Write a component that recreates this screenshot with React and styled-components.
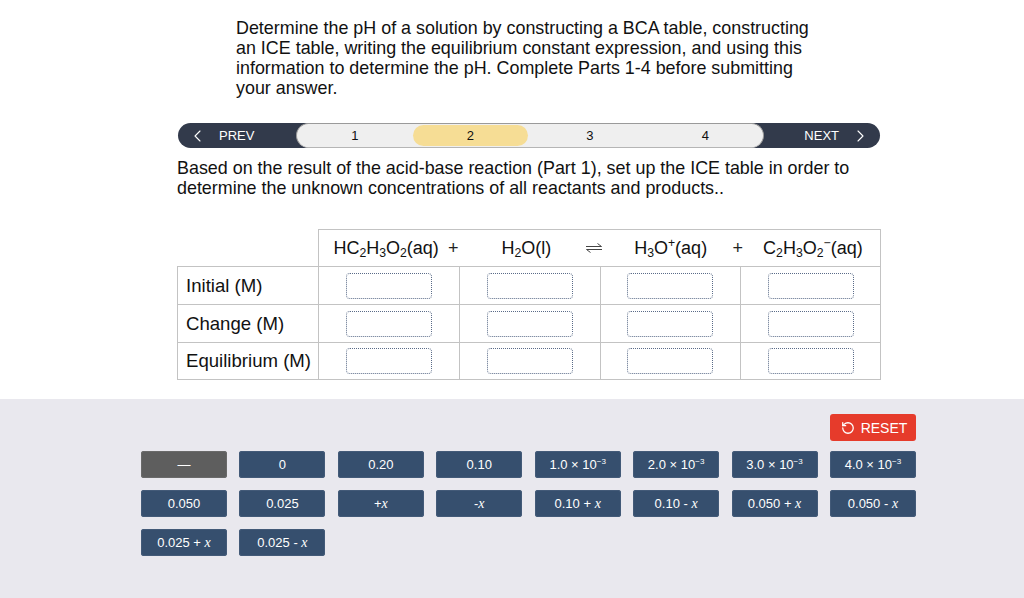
import React from "react";
import styled, { createGlobalStyle } from "styled-components";
import { RotateCcw } from "lucide-react";

const Global = createGlobalStyle`
  html, body { margin: 0; padding: 0; background: #fff; }
  body { font-family: "Liberation Sans", Arial, sans-serif; color: #111; }
  * { box-sizing: border-box; }
`;

const Page = styled.div`
  min-height: 598px;
  display: flex;
  flex-direction: column;
`;

const Main = styled.div`
  width: 704px;
  margin-left: 177px;
  padding-top: 18px;
  padding-bottom: 19px;
`;

const Intro = styled.p`
  margin: 0 0 25px 59px;
  width: 590px;
  font-size: 17.9px;
  line-height: 20px;
  color: #111;
`;

const Nav = styled.div`
  display: flex;
  height: 25px;
  margin-left: 1px;
  width: 702px;
  background: #323a4b;
  border-radius: 13px;
`;

const NavButton = styled.div`
  width: ${(p) => p.$w}px;
  display: flex;
  align-items: center;
  justify-content: ${(p) => (p.$right ? "flex-end" : "flex-start")};
  gap: 18px;
  padding: 0 ${(p) => (p.$right ? "16px" : "0")} 0 ${(p) => (p.$right ? "0" : "16px")};
  color: #fff;
  font-size: 13px;
`;

const Track = styled.div`
  flex: 1;
  display: flex;
  background: #efefef;
  border: 1px solid #9a9a9a;
  border-bottom-color: #b5b5b5;
  border-radius: 13px;
  overflow: hidden;
`;

const Step = styled.div`
  flex: 1;
  display: flex;
  align-items: center;
  justify-content: center;
  font-size: 13px;
  color: #111;
  background: ${(p) => (p.$active ? "#f6dd95" : "transparent")};
  border-radius: 12px;
  margin: 1px ${(p) => (p.$active ? "4px" : "0")} 1px 0;
`;

const Prompt = styled.p`
  margin: 10px 0 31px 0;
  font-size: 17.9px;
  line-height: 20px;
  color: #111;
`;

const Table = styled.div`
  display: grid;
  grid-template-columns: 141px repeat(4, 1fr);
  grid-template-rows: 37px repeat(3, 38px);
  width: 704px;
`;

const Corner = styled.div``;

const Header = styled.div`
  grid-column: 2 / span 4;
  display: flex;
  align-items: center;
  border: 1px solid #c3c3c3;
  border-bottom: none;
  font-size: 18px;
  color: #111;
`;

const Species = styled.div`
  flex: 1;
  text-align: center;
  white-space: nowrap;
  padding-left: ${(p) => p.$shift || 0}px;
`;

const Op = styled.div`
  width: 0;
  display: flex;
  justify-content: center;
  white-space: nowrap;
  color: #222;
  & > svg { flex-shrink: 0; }
`;

const Sub = styled.sub`
  font-size: 0.68em;
  vertical-align: -0.22em;
  line-height: 0;
`;

const Sup = styled.sup`
  font-size: 0.68em;
  vertical-align: 0.55em;
  line-height: 0;
`;

const Label = styled.div`
  display: flex;
  align-items: center;
  padding-left: 8px;
  font-size: 18.6px;
  color: #111;
  border-top: 1px solid #c3c3c3;
  border-left: 1px solid #c3c3c3;
  border-bottom: ${(p) => (p.$last ? "1px solid #c3c3c3" : "none")};
`;

const Cell = styled.div`
  display: flex;
  align-items: center;
  justify-content: center;
  border-top: 1px solid #c3c3c3;
  border-left: 1px solid #c3c3c3;
  border-right: ${(p) => (p.$lastCol ? "1px solid #c3c3c3" : "none")};
  border-bottom: ${(p) => (p.$last ? "1px solid #c3c3c3" : "none")};
`;

const Drop = styled.div`
  width: 86px;
  height: 26px;
  background: #fff;
  border: 1px dotted #5a6b88;
  border-radius: 4px;
`;

const Tray = styled.div`
  flex: 1;
  background: #e9e8ee;
  padding: 15px 0 30px 141px;
`;

const TrayInner = styled.div`
  width: 775px;
  display: flex;
  flex-direction: column;
  gap: 10px;
`;

const ResetRow = styled.div`
  display: flex;
  justify-content: flex-end;
`;

const Reset = styled.button`
  width: 86px;
  height: 27px;
  border: none;
  border-radius: 3px;
  background: #e63b2b;
  color: #fff;
  font-family: "Liberation Sans", Arial, sans-serif;
  font-size: 14px;
  display: flex;
  align-items: center;
  justify-content: center;
  gap: 6px;
  padding: 0 0 0 2px;
`;

const Grid = styled.div`
  display: grid;
  grid-template-columns: repeat(8, 86px);
  column-gap: 12.43px;
  row-gap: 12px;
`;

const Tile = styled.div`
  height: 27px;
  border-radius: 3px;
  background: ${(p) => (p.$muted ? "#5e5e5e" : "#364f6e")};
  color: #fff;
  font-size: 13px;
  display: flex;
  align-items: center;
  justify-content: center;
  white-space: nowrap;
  box-shadow: 0 0 0 1px ${(p) => (p.$muted ? "#6a6a6a" : "#435a78")} inset;
`;

const X = styled.span`
  font-family: "Liberation Serif", "Times New Roman", serif;
  font-style: italic;
  font-size: 14px;
`;

const Exp = styled.sup`
  font-size: 0.62em;
  vertical-align: 0.6em;
  line-height: 0;
`;

const Chev = ({ dir }) => (
  <svg width="7" height="12" viewBox="0 0 7 12" fill="none">
    <path
      d={dir === "left" ? "M6 1 L1 6 L6 11" : "M1 1 L6 6 L1 11"}
      stroke="#fff"
      strokeWidth="1.1"
      strokeLinecap="round"
      strokeLinejoin="round"
    />
  </svg>
);

const Equil = () => (
  <svg width="18" height="12" viewBox="0 0 18 12" fill="none">
    <path d="M1 4.5 H16.5 L12.5 1.5" stroke="#444" strokeWidth="1" strokeLinejoin="round" />
    <path d="M17 7.5 H1.5 L5.5 10.5" stroke="#444" strokeWidth="1" strokeLinejoin="round" />
  </svg>
);

const sci = (m) => (
  <span>
    {m} × 10<Exp>−3</Exp>
  </span>
);

const tiles = [
  { t: "—", muted: true },
  { t: "0" },
  { t: "0.20" },
  { t: "0.10" },
  { t: sci("1.0") },
  { t: sci("2.0") },
  { t: sci("3.0") },
  { t: sci("4.0") },
  { t: "0.050" },
  { t: "0.025" },
  { t: <span>+<X>x</X></span> },
  { t: <span>-<X>x</X></span> },
  { t: <span>0.10 + <X>x</X></span> },
  { t: <span>0.10 - <X>x</X></span> },
  { t: <span>0.050 + <X>x</X></span> },
  { t: <span>0.050 - <X>x</X></span> },
  { t: <span>0.025 + <X>x</X></span> },
  { t: <span>0.025 - <X>x</X></span> },
];

const rows = ["Initial (M)", "Change (M)", "Equilibrium (M)"];

export default function App() {
  return (
    <Page>
      <Global />
      <Main>
        <Intro>
          Determine the pH of a solution by constructing a BCA table, constructing an ICE
          table, writing the equilibrium constant expression, and using this information to
          determine the pH. Complete Parts 1-4 before submitting your answer.
        </Intro>
        <Nav>
          <NavButton $w={118}>
            <Chev dir="left" />
            <span>PREV</span>
          </NavButton>
          <Track>
            <Step>1</Step>
            <Step $active>2</Step>
            <Step>3</Step>
            <Step>4</Step>
          </Track>
          <NavButton $w={116} $right>
            <span>NEXT</span>
            <Chev dir="right" />
          </NavButton>
        </Nav>
        <Prompt>
          Based on the result of the acid-base reaction (Part 1), set up the ICE table in order to
          determine the unknown concentrations of all reactants and products..
        </Prompt>
        <Table>
          <Corner />
          <Header>
            <Species>
              HC<Sub>2</Sub>H<Sub>3</Sub>O<Sub>2</Sub>(aq)
            </Species>
            <Op>+</Op>
            <Species $shift={6}>
              H<Sub>2</Sub>O(l)
            </Species>
            <Op>
              <Equil />
            </Op>
            <Species $shift={10}>
              H<Sub>3</Sub>O<Sup>+</Sup>(aq)
            </Species>
            <Op>+</Op>
            <Species $shift={8}>
              C<Sub>2</Sub>H<Sub>3</Sub>O<Sub>2</Sub>
              <Sup>−</Sup>(aq)
            </Species>
          </Header>
          {rows.map((r, i) => (
            <React.Fragment key={r}>
              <Label $last={i === rows.length - 1}>{r}</Label>
              {[0, 1, 2, 3].map((c) => (
                <Cell key={c} $lastCol={c === 3} $last={i === rows.length - 1}>
                  <Drop />
                </Cell>
              ))}
            </React.Fragment>
          ))}
        </Table>
      </Main>
      <Tray>
        <TrayInner>
          <ResetRow>
            <Reset>
              <RotateCcw size={14} strokeWidth={2.2} />
              RESET
            </Reset>
          </ResetRow>
          <Grid>
            {tiles.map((tile, i) => (
              <Tile key={i} $muted={tile.muted}>
                {tile.t}
              </Tile>
            ))}
          </Grid>
        </TrayInner>
      </Tray>
    </Page>
  );
}
